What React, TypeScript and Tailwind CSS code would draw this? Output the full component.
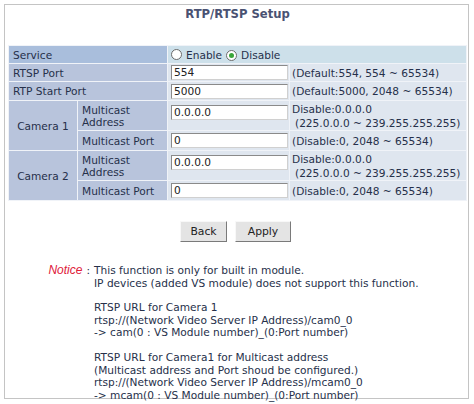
import React from "react";

const font = { fontFamily: '"DejaVu Sans", Verdana, sans-serif' };

function Radio({ checked }: { checked?: boolean }) {
  return (
    <span className="inline-flex items-center justify-center w-[11px] h-[11px] rounded-full border border-[#6b6b6b] bg-white">
      {checked && <span className="block w-[5px] h-[5px] rounded-full bg-[#3aa53a]" />}
    </span>
  );
}

function Input({ value }: { value: string }) {
  return (
    <div className="w-[117px] h-[15px] bg-white border border-t-[#8a8a8a] border-l-[#8a8a8a] border-r-[#d0d0d0] border-b-[#d0d0d0] flex items-center px-[2px] leading-none text-[#222]">
      {value}
    </div>
  );
}

function Button({ label, w }: { label: string; w: string }) {
  return (
    <div
      className={`${w} h-[21px] flex items-center justify-center bg-[#e4e4e4] border border-t-[#f8f8f8] border-l-[#f8f8f8] border-r-[#7a7a7a] border-b-[#7a7a7a] text-[#222] text-[10.8px]`}
    >
      {label}
    </div>
  );
}

export default function App() {
  const label = "bg-[#b8c4dc] text-[#26304a] px-[4px]";
  const val = "bg-[#dfe6ef] px-[3px]";
  const desc = "bg-[#dfe6ef] px-[2px] text-[#26304a]";
  return (
    <div className="w-[474px] h-[404px] bg-white pt-[4px] pl-[4px]" style={font}>
      <div className="w-[465px] h-[395px] border border-[#c4c4c4] pl-[3px] pr-[1px] text-[10.6px] leading-[12px]">
        <div className="pt-[2px] h-[40px] text-center font-bold text-[11.6px] text-[#4a5272] leading-[14px]">
          RTP/RTSP Setup
        </div>
        <table className="w-[459px] border-separate border-spacing-[1px] bg-[#f0f3f8] table-fixed">
          <colgroup>
            <col className="w-[68px]" />
            <col className="w-[89px]" />
            <col className="w-[121px]" />
            <col />
          </colgroup>
          <tbody>
            <tr className="h-[17px]">
              <td colSpan={2} className="bg-[#a9bedc] text-[#26304a] px-[4px]">Service</td>
              <td colSpan={2} className="bg-[#cde0ea] px-[3px] text-[#26304a]">
                <div className="flex items-center">
                  <Radio />
                  <span className="ml-[4px]">Enable</span>
                  <span className="ml-[4px]"><Radio checked /></span>
                  <span className="ml-[4px]">Disable</span>
                </div>
              </td>
            </tr>
            <tr className="h-[17px]">
              <td colSpan={2} className={label}>RTSP Port</td>
              <td className={val}><Input value="554" /></td>
              <td className={desc}>(Default:554, 554 ~ 65534)</td>
            </tr>
            <tr className="h-[18px]">
              <td colSpan={2} className={label}>RTP Start Port</td>
              <td className={val}><Input value="5000" /></td>
              <td className={desc}>(Default:5000, 2048 ~ 65534)</td>
            </tr>
            {[1, 2].map((n) => (
              <React.Fragment key={n}>
                <tr className="h-[29px]">
                  <td rowSpan={2} className="bg-[#b8c4dc] text-[#26304a] text-center">Camera {n}</td>
                  <td className={label}>
                    <div>Multicast</div>
                    <div>Address</div>
                  </td>
                  <td className={`${val} align-top pt-[4px]`}><Input value="0.0.0.0" /></td>
                  <td className={desc}>
                    <div>Disable:0.0.0.0</div>
                    <div className="pl-[3px] pt-[2px]">(225.0.0.0 ~ 239.255.255.255)</div>
                  </td>
                </tr>
                <tr className="h-[19px]">
                  <td className={label}>Multicast Port</td>
                  <td className={val}><Input value="0" /></td>
                  <td className={desc}>(Disable:0, 2048 ~ 65534)</td>
                </tr>
              </React.Fragment>
            ))}
          </tbody>
        </table>
        <div className="mt-[20px] flex justify-center gap-[8px] pr-[4px]">
          <Button label="Back" w="w-[47px]" />
          <Button label="Apply" w="w-[56px]" />
        </div>
        <div className="mt-[22px] flex text-[#26304a] leading-[12.6px]">
          <div className="w-[82px] flex justify-end items-start shrink-0">
            <span
              className="text-[#e0203a] italic text-[12px] leading-[12.6px]"
              style={{ fontFamily: '"Liberation Sans", Arial, sans-serif' }}
            >
              Notice
            </span>
            <span className="ml-[4px]">:</span>
          </div>
          <div className="ml-[4px]">
            <div>This function is only for built in module.</div>
            <div>IP devices (added VS module) does not support this function.</div>
            <div className="h-[12px]" />
            <div>RTSP URL for Camera 1</div>
            <div>rtsp://(Network Video Server IP Address)/cam0_0</div>
            <div>-&gt; cam(0 : VS Module number)_(0:Port number)</div>
            <div className="h-[12px]" />
            <div>RTSP URL for Camera1 for Multicast address</div>
            <div>(Multicast address and Port shoud be configured.)</div>
            <div>rtsp://(Network Video Server IP Address)/mcam0_0</div>
            <div>-&gt; mcam(0 : VS Module number)_(0:Port number)</div>
          </div>
        </div>
      </div>
    </div>
  );
}
